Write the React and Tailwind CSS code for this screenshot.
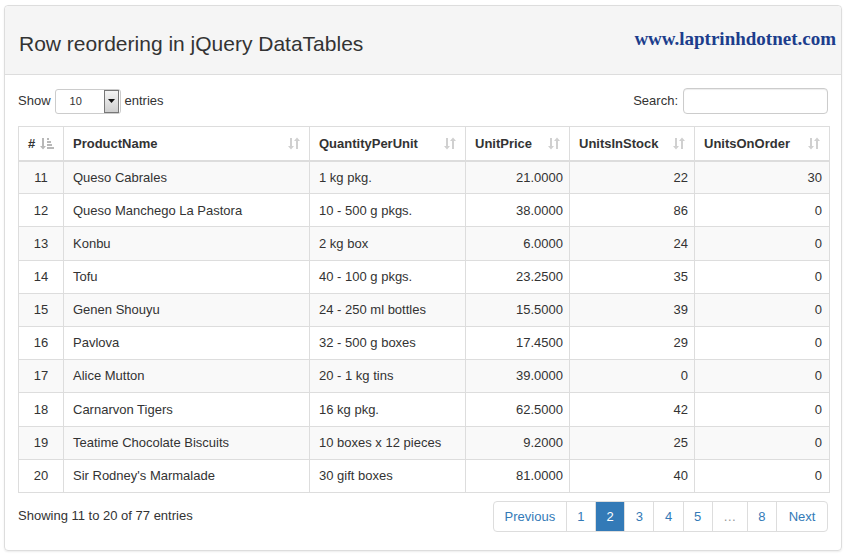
const rows = [
  [11, "Queso Cabrales", "1 kg pkg.", "21.0000", 22, 30],
  [12, "Queso Manchego La Pastora", "10 - 500 g pkgs.", "38.0000", 86, 0],
  [13, "Konbu", "2 kg box", "6.0000", 24, 0],
  [14, "Tofu", "40 - 100 g pkgs.", "23.2500", 35, 0],
  [15, "Genen Shouyu", "24 - 250 ml bottles", "15.5000", 39, 0],
  [16, "Pavlova", "32 - 500 g boxes", "17.4500", 29, 0],
  [17, "Alice Mutton", "20 - 1 kg tins", "39.0000", 0, 0],
  [18, "Carnarvon Tigers", "16 kg pkg.", "62.5000", 42, 0],
  [19, "Teatime Chocolate Biscuits", "10 boxes x 12 pieces", "9.2000", 25, 0],
  [20, "Sir Rodney's Marmalade", "30 gift boxes", "81.0000", 40, 0],
];

const SortBoth = () => (
  <svg width="12" height="13" viewBox="0 0 12 13" className="shrink-0">
    <path d="M1 1h2v8h2l-3 3.5L-1 9h2z" fill="#d0d0d0" transform="translate(1 0)" />
    <path d="M8 12h2V4h2L9 0.5 6 4h2z" fill="#d0d0d0" />
  </svg>
);

const SortAsc = () => (
  <svg width="14" height="13" viewBox="0 0 14 13" className="shrink-0">
    <path d="M2 1h2v8h2l-3 3.5L0 9h2z" fill="#b8b8b8" />
    <rect x="7" y="1" width="2" height="2" fill="#b8b8b8" />
    <rect x="7" y="4" width="4" height="2" fill="#b8b8b8" />
    <rect x="7" y="7" width="5" height="2" fill="#b8b8b8" />
    <rect x="7" y="10" width="7" height="2" fill="#b8b8b8" />
  </svg>
);

const Th = ({ children, w, icon, last }) => (
  <th
    className={`h-[34px] border-l border-[#ddd] ${last ? "border-r" : ""} px-[9px] text-left font-bold align-middle`}
    style={{ width: w }}
  >
    <div className="flex items-center justify-between">
      <span>{children}</span>
      {icon}
    </div>
  </th>
);

const pages = ["Previous", "1", "2", "3", "4", "5", "…", "8", "Next"];

export default function App() {
  return (
    <div className="w-[846px] h-[554px] bg-white pt-[5px] px-[4px] text-[13px] text-[#333]" style={{ fontFamily: '"Liberation Sans", Arial, sans-serif' }}>
      <div className="h-[546px] border border-[#ddd] rounded-[4px] shadow-[0_1px_2px_rgba(0,0,0,0.08)]">
        <div className="h-[69px] bg-[#f5f5f5] border-b border-[#ddd] rounded-t-[4px] flex items-center justify-between pl-[14px] pr-[5px]">
          <h1 className="text-[21px] font-normal mt-[7px]">Row reordering in jQuery DataTables</h1>
          <span className="text-[19px] font-bold text-[#1c3d8c] -mt-[1px]" style={{ fontFamily: '"Liberation Serif", "Times New Roman", serif' }}>
            www.laptrinhdotnet.com
          </span>
        </div>
        <div className="px-[13px]">
          <div className="flex items-center justify-between h-[51px] pt-[1px]">
            <div className="flex items-center gap-[4px]">
              <span>Show</span>
              <div className="flex items-center w-[66px] h-[25px] border border-[#ccc] rounded-[3px] bg-white">
                <span className="flex-1 pl-[14px] text-[11px]">10</span>
                <span className="w-[15px] h-[23px] mr-[1px] border border-[#777] bg-gradient-to-b from-[#f4f4f4] to-[#cfcfcf] flex items-center justify-center">
                  <svg width="7" height="4" viewBox="0 0 7 4"><path d="M0 0h7L3.5 4z" fill="#111" /></svg>
                </span>
              </div>
              <span>entries</span>
            </div>
            <div className="flex items-center gap-[5px]">
              <span>Search:</span>
              <div className="w-[145px] h-[26px] border border-[#ccc] rounded-[4px] shadow-[inset_0_1px_1px_rgba(0,0,0,0.075)]"></div>
            </div>
          </div>
          <table className="w-[811px] border-collapse table-fixed">
            <thead>
              <tr className="border-t border-[#ddd] border-b-2">
                <Th w={45} icon={<SortAsc />}>#</Th>
                <Th w={246} icon={<SortBoth />}>ProductName</Th>
                <Th w={156} icon={<SortBoth />}>QuantityPerUnit</Th>
                <Th w={104} icon={<SortBoth />}>UnitPrice</Th>
                <Th w={125} icon={<SortBoth />}>UnitsInStock</Th>
                <Th w={135} icon={<SortBoth />} last>UnitsOnOrder</Th>
              </tr>
            </thead>
            <tbody>
              {rows.map((r, i) => (
                <tr key={r[0]} className={`h-[33.2px] border-b border-[#ddd] ${i % 2 === 0 ? "bg-[#f9f9f9]" : "bg-white"}`}>
                  <td className="border-l border-[#ddd] text-center">{r[0]}</td>
                  <td className="border-l border-[#ddd] px-[9px]">{r[1]}</td>
                  <td className="border-l border-[#ddd] px-[9px]">{r[2]}</td>
                  <td className="border-l border-[#ddd] px-[6px] text-right">{r[3]}</td>
                  <td className="border-l border-[#ddd] px-[6px] text-right">{r[4]}</td>
                  <td className="border-l border-r border-[#ddd] px-[7px] text-right">{r[5]}</td>
                </tr>
              ))}
            </tbody>
          </table>
          <div className="flex items-center justify-between mt-[8px]">
            <span className="-mt-[2px]">Showing 11 to 20 of 77 entries</span>
            <div className="flex h-[31px] border border-[#ddd] rounded-[4px] overflow-hidden">
              {pages.map((p, i) => (
                <span
                  key={p}
                  className={`flex items-center justify-center ${i > 0 ? "border-l border-[#ddd]" : ""} ${
                    p === "Previous" ? "w-[72px]" : p === "Next" ? "w-[51px]" : p === "…" ? "w-[35px]" : "w-[29.2px]"
                  } ${p === "2" ? "bg-[#337ab7] text-white border-[#337ab7]" : p === "…" ? "text-[#999]" : "text-[#337ab7]"}`}
                >
                  {p}
                </span>
              ))}
            </div>
          </div>
        </div>
      </div>
    </div>
  );
}
